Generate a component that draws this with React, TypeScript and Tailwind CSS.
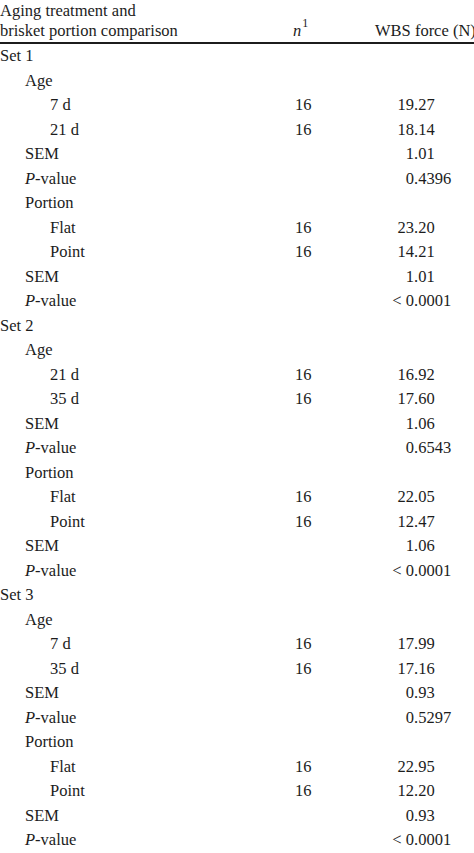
import React from 'react';

type Row = { label: string; level: number; n?: string; value?: string; italicP?: boolean };

const block = (name: string, a: [string, string, string][], sem: string, pa: string, p: [string, string, string][], sem2: string, pp: string): Row[] => [
  { label: name, level: 0 },
  { label: 'Age', level: 1 },
  ...a.map(([l, n, v]) => ({ label: l, level: 2, n, value: v })),
  { label: 'SEM', level: 1, value: sem },
  { label: '-value', level: 1, value: pa, italicP: true },
  { label: 'Portion', level: 1 },
  ...p.map(([l, n, v]) => ({ label: l, level: 2, n, value: v })),
  { label: 'SEM', level: 1, value: sem2 },
  { label: '-value', level: 1, value: pp, italicP: true },
];

const rows: Row[] = [
  ...block('Set 1', [['7 d', '16', '19.27'], ['21 d', '16', '18.14']], '1.01', '0.4396', [['Flat', '16', '23.20'], ['Point', '16', '14.21']], '1.01', '< 0.0001'),
  ...block('Set 2', [['21 d', '16', '16.92'], ['35 d', '16', '17.60']], '1.06', '0.6543', [['Flat', '16', '22.05'], ['Point', '16', '12.47']], '1.06', '< 0.0001'),
  ...block('Set 3', [['7 d', '16', '17.99'], ['35 d', '16', '17.16']], '0.93', '0.5297', [['Flat', '16', '22.95'], ['Point', '16', '12.20']], '0.93', '< 0.0001'),
];

const indent = ['pl-0', 'pl-[25px]', 'pl-[50px]'];

function Value({ v }: { v?: string }) {
  if (!v) return null;
  const i = v.indexOf('.');
  return (
    <span className="flex whitespace-nowrap">
      <span className="inline-block w-[40px] text-right">{v.slice(0, i)}</span>
      <span>{v.slice(i)}</span>
    </span>
  );
}

export default function App() {
  return (
    <div className="w-[474px] h-[853px] overflow-hidden bg-white text-[#1c1c1c] text-[16.5px] font-['Liberation_Serif','Times_New_Roman',serif]">
      <div className="grid grid-cols-[293px_81px_1fr] pt-[1.4px] leading-[20px]">
        <div className="whitespace-nowrap">
          Aging treatment and
          <br />
          brisket portion comparison
        </div>
        <div className="self-end whitespace-nowrap">
          <i>n</i>
          <span className="relative top-[-9px] ml-[1px] text-[12px] leading-none">1</span>
        </div>
        <div className="self-end whitespace-nowrap pl-[1px]">WBS force (N)</div>
      </div>
      <div className="mt-[1px] h-[2px] bg-[#1c1c1c]" />
      <div>
        {rows.map((r, idx) => (
          <div key={idx} className="grid grid-cols-[294px_80px_1fr] h-[24.5px] leading-[24.5px]">
            <div className={`whitespace-nowrap ${indent[r.level]}`}>
              {r.italicP && <i>P</i>}
              {r.label}
            </div>
            <div className="pl-[1px]">{r.n}</div>
            <div>
              <Value v={r.value} />
            </div>
          </div>
        ))}
      </div>
    </div>
  );
}
